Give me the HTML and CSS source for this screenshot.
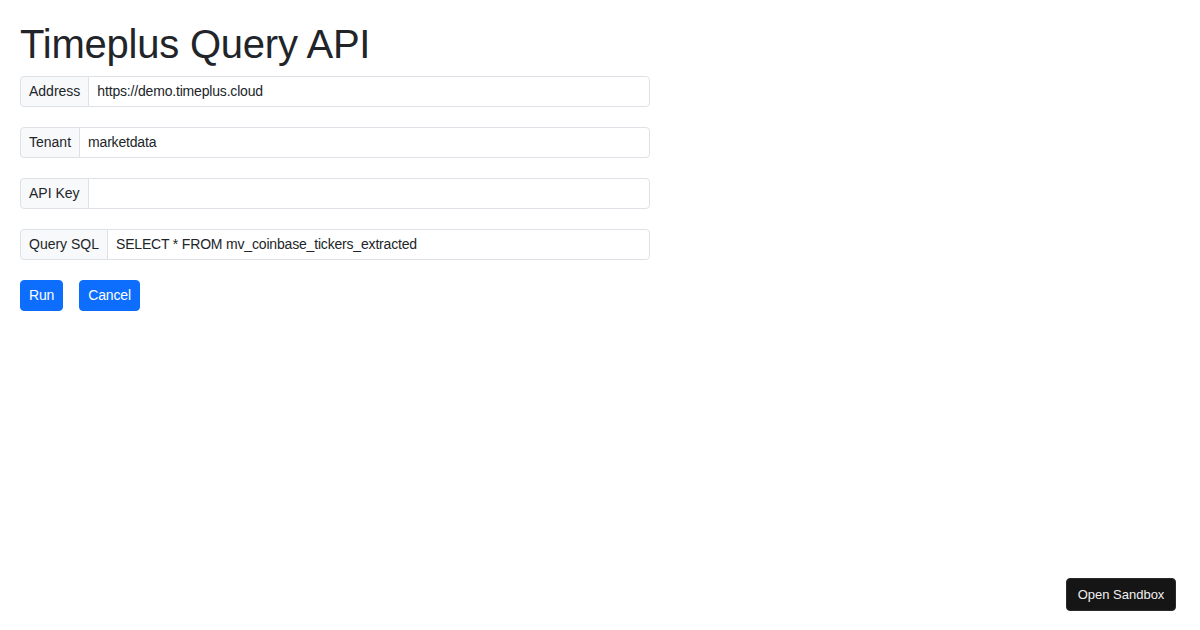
FILE: index.html
```html
<!DOCTYPE html>
<html lang="en">
<head>
<meta charset="utf-8">
<title>Timeplus Query API</title>
<link rel="stylesheet" href="styles.css">
</head>
<body>
<main class="page">
  <h1 class="title">Timeplus Query API</h1>
  <div class="input-group">
    <span class="group-label">Address</span>
    <input class="field" type="text" value="https://demo.timeplus.cloud">
  </div>
  <div class="input-group">
    <span class="group-label">Tenant</span>
    <input class="field" type="text" value="marketdata">
  </div>
  <div class="input-group">
    <span class="group-label">API Key</span>
    <input class="field" type="text" value="">
  </div>
  <div class="input-group">
    <span class="group-label">Query SQL</span>
    <input class="field" type="text" value="SELECT * FROM mv_coinbase_tickers_extracted">
  </div>
  <div class="actions">
    <button class="btn" type="button">Run</button>
    <button class="btn" type="button">Cancel</button>
  </div>
</main>
<button class="sandbox-btn" type="button">Open Sandbox</button>
</body>
</html>
```
FILE: styles.css
```css
* { box-sizing: border-box; }
html, body {
  margin: 0;
  background: #fff;
  color: #212529;
  font-family: "Liberation Sans", Arial, sans-serif;
  font-size: 16px;
  line-height: 1.5;
}
.page {
  padding: 20px;
  width: 670px;
}
.title {
  margin: 0 0 8px;
  font-size: 40px;
  font-weight: 400;
  line-height: 1.2;
  letter-spacing: -0.22px;
  color: #212529;
}
.input-group {
  display: flex;
  width: 630px;
  height: 31px;
  margin-bottom: 20px;
}
.group-label {
  display: flex;
  align-items: center;
  padding: 0 8px;
  font-size: 14px;
  line-height: 1.5;
  color: #212529;
  background: #f8f9fa;
  border: 1px solid #dee2e6;
  border-radius: 4px 0 0 4px;
  white-space: nowrap;
}
.field {
  flex: 1;
  min-width: 0;
  margin-left: -1px;
  padding: 4px 8px;
  font-family: inherit;
  font-size: 14px;
  line-height: 1.5;
  letter-spacing: -0.18px;
  color: #212529;
  background: #fff;
  border: 1px solid #dee2e6;
  border-radius: 0 4px 4px 0;
  outline: none;
}
.actions {
  display: flex;
  gap: 16px;
}
.btn {
  height: 31px;
  padding: 4px 8px;
  font-family: inherit;
  font-size: 14px;
  line-height: 1.5;
  letter-spacing: -0.15px;
  color: #fff;
  background: #0d6efd;
  border: 1px solid #0d6efd;
  border-radius: 4px;
  cursor: pointer;
}
.sandbox-btn {
  position: fixed;
  right: 24px;
  bottom: 19px;
  width: 110px;
  height: 33px;
  padding: 0;
  font-family: inherit;
  font-size: 13px;
  color: #f0f0f0;
  background: #151515;
  border: 1px solid #2a2a2a;
  border-radius: 4px;
}
```
